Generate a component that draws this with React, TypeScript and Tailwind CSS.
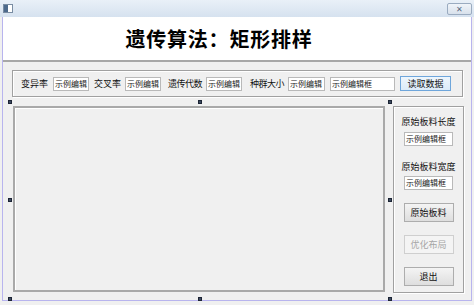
const font = "font-['Microsoft_YaHei','Noto_Sans_CJK_SC',sans-serif]";

function Edit({ w, text }: { w: string; text: string }) {
  return (
    <div
      className={`${w} h-[14px] bg-white border border-[#b9b9b9] text-[8px] leading-[12px] pl-[1px] text-[#222] overflow-hidden whitespace-nowrap`}
    >
      {text}
    </div>
  );
}

function Handle({ x, y }: { x: number; y: number }) {
  return (
    <div
      className="absolute w-[4px] h-[4px] bg-[#3c4a60] border border-[#1c2434]"
      style={{ left: x, top: y }}
    />
  );
}

function Btn({ label, disabled }: { label: string; disabled?: boolean }) {
  return (
    <div
      className={`w-[50px] h-[19px] flex items-center justify-center text-[9px] border ${
        disabled
          ? "border-[#cfcfcf] bg-[#f4f4f4] text-[#a6a6a6]"
          : "border-[#adadad] bg-gradient-to-b from-[#f4f4f4] to-[#dedede] text-[#111]"
      }`}
    >
      {label}
    </div>
  );
}

export default function App() {
  return (
    <div className={`relative w-[474px] h-[305px] bg-[#f0f0f0] overflow-hidden ${font}`}>
      {/* title bar */}
      <div className="h-[17px] flex items-center justify-between bg-gradient-to-b from-[#e9f0f8] to-[#d6e2ef] pl-[3px] pr-[2px]">
        <div className="w-[10px] h-[9px] border border-[#7a8da3] bg-white flex">
          <div className="w-[4px] h-full bg-[#4d6a8c]" />
        </div>
        <div className="w-[25px] h-[12px] rounded-[2px] border border-[#9aabc0] bg-gradient-to-b from-[#f0f4f9] to-[#d8e1ec] flex items-center justify-center text-[8px] leading-none text-[#586a80]">
          ✕
        </div>
      </div>

      {/* body */}
      <div className="ml-[2px] mr-[2px] h-[284px] border-l border-r border-b border-[#b8b4ee] flex flex-col">
        {/* header */}
        <div className="h-[45px] bg-white border-b-2 border-[#a7a7a7] flex items-center justify-center">
          <span className="text-[20px] font-bold tracking-[0.8px] text-black ml-[-36px] font-['Noto_Sans_CJK_SC',serif]">
            遗传算法：矩形排样
          </span>
        </div>

        {/* toolbar group */}
        <div className="mt-[8px] ml-[9px] w-[451px] h-[27px] border border-[#a0a0a0] shadow-[inset_1px_1px_0_#ffffff,1px_1px_0_#ffffff] flex items-center text-[9px] text-[#111]">
          <span className="ml-[8px]">变异率</span>
          <div className="ml-[5px]"><Edit w="w-[36px]" text="示例编辑" /></div>
          <span className="ml-[5px]">交叉率</span>
          <div className="ml-[4px]"><Edit w="w-[36px]" text="示例编辑" /></div>
          <span className="ml-[7px] tracking-[-0.5px]">遗传代数</span>
          <div className="ml-[4px]"><Edit w="w-[36px]" text="示例编辑" /></div>
          <span className="ml-[8px] tracking-[-0.5px]">种群大小</span>
          <div className="ml-[4px]"><Edit w="w-[37px]" text="示例编辑" /></div>
          <div className="ml-[5px]"><Edit w="w-[65px]" text="示例编辑框" /></div>
          <div className="ml-[5px] w-[51px] h-[15px] border border-[#6fa6db] bg-gradient-to-b from-[#eef6fd] to-[#dcebf9] flex items-center justify-center">
            读取数据
          </div>
        </div>

        {/* main area */}
        <div className="mt-[9px] ml-[10px] flex gap-[8px] h-[186px]">
          <div className="w-[372px] h-[186px] bg-[#f0f0f0] border-2 border-[#a9a9a9] shadow-[inset_1px_1px_0_#ffffff]" />
          <div className="w-[71px] h-[187px] border border-[#a0a0a0] shadow-[inset_1px_1px_0_#ffffff,1px_1px_0_#ffffff] flex flex-col items-center text-[9px] text-[#111]">
            <span className="mt-[8px]">原始板料长度</span>
            <div className="mt-[3px]"><Edit w="w-[49px]" text="示例编辑框" /></div>
            <span className="mt-[14px]">原始板料宽度</span>
            <div className="mt-[3px]"><Edit w="w-[49px]" text="示例编辑框" /></div>
            <div className="mt-[13px]"><Btn label="原始板料" /></div>
            <div className="mt-[13px]"><Btn label="优化布局" disabled /></div>
            <div className="mt-[13px]"><Btn label="退出" /></div>
          </div>
        </div>
      </div>

      {/* selection handles */}
      <Handle x={8} y={100} />
      <Handle x={198} y={100} />
      <Handle x={388} y={100} />
      <Handle x={8} y={198} />
      <Handle x={388} y={198} />
      <Handle x={8} y={297} />
      <Handle x={198} y={297} />
      <Handle x={388} y={297} />
    </div>
  );
}
